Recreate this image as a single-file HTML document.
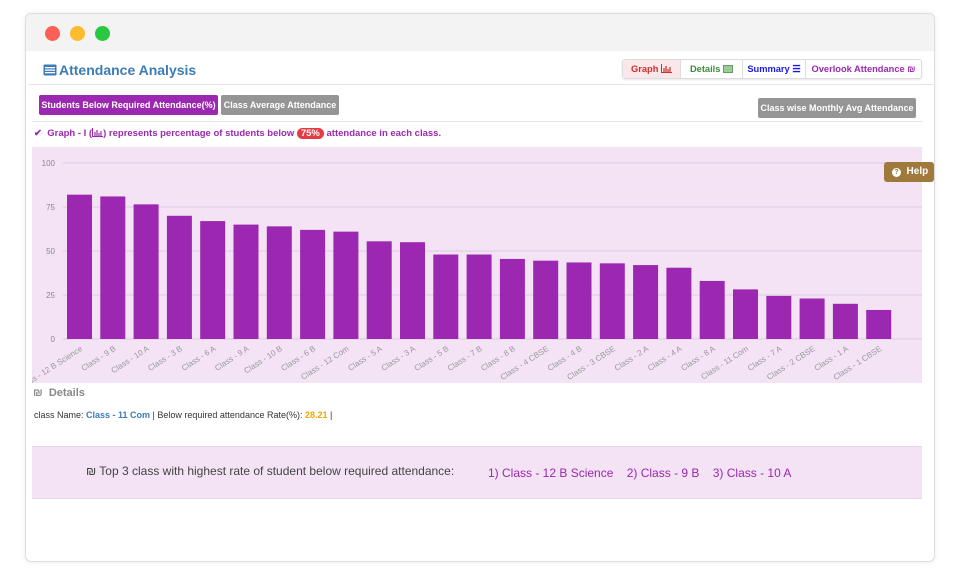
<!DOCTYPE html>
<html><head><meta charset="utf-8"><style>
*{margin:0;padding:0;box-sizing:border-box}
body{width:960px;height:576px;background:#fff;font-family:"Liberation Sans",Arial,sans-serif;position:relative;overflow:hidden}
.win{position:absolute;left:25px;top:13px;width:910px;height:549px;border:1px solid #ddd;border-radius:6px;background:#fff;box-shadow:0 0 6px rgba(0,0,0,.08)}
.bar{position:absolute;left:0;top:0;width:908px;height:37px;background:#f3f3f3;border-radius:6px 6px 0 0}
.dot{position:absolute;top:12px;width:15px;height:15px;border-radius:50%}
.abs{position:absolute}
.btn{position:absolute;color:#fff;font-size:9px;font-weight:bold;text-align:center;line-height:20px;height:20px;border-radius:2px;white-space:nowrap}
.tabs{position:absolute;left:622px;top:59px;width:300px;height:20px;border:1px solid #ddd;border-radius:3px;display:flex;font-size:9.3px;font-weight:bold;box-shadow:0 1px 2px rgba(0,0,0,.1);white-space:nowrap}
.tabs div{line-height:19px;border-right:1px solid #ddd;text-align:center}
.ic{display:inline-block;vertical-align:-1px}
</style></head><body>
<div class="win"><div class="bar"></div>
<div class="dot" style="left:19px;background:#fe5f57"></div>
<div class="dot" style="left:44px;background:#febc2e"></div>
<div class="dot" style="left:69px;background:#28c840"></div>
</div>
<div class="abs" style="left:28px;top:84px;width:906px;border-top:1px solid #e6e6e6"></div>
<svg class="abs" style="left:43px;top:64px" width="14" height="12"><rect x="0.5" y="0.5" width="13" height="11" rx="1" fill="#3d7bb5"/><rect x="2" y="3" width="10" height="1.3" fill="#fff"/><rect x="2" y="5.5" width="10" height="1.3" fill="#fff"/><rect x="2" y="8" width="10" height="1.3" fill="#fff"/></svg>
<div class="abs" style="left:59px;top:62px;font-size:14px;font-weight:bold;color:#3d7bb5">Attendance Analysis</div>
<div class="tabs"><div style="width:58px;color:#c9302c;background:#fbe6ea">Graph <svg class="ic" width="11" height="9"><path d="M0.5 0v8.5h10.5" stroke="#c9302c" fill="none"/><path d="M3 8V4M5 8V2M7 8V5M9 8V3" stroke="#c9302c" stroke-width="1.2"/></svg></div><div style="width:62px;color:#3c8c3c">Details <svg class="ic" width="10" height="8"><rect x="0.5" y="0.5" width="9" height="7" fill="#9c9" stroke="#696"/></svg></div><div style="width:63px;color:#1a1ae6">Summary ☰</div><div style="width:115px;color:#9c27b0;border-right:none">Overlook Attendance ₪</div></div>
<div class="btn" style="left:39px;top:95px;width:179px;background:#9c27b0">Students Below Required Attendance(%)</div>
<div class="btn" style="left:221px;top:95px;width:118px;background:#959595">Class Average Attendance</div>
<div class="btn" style="left:758px;top:98px;width:158px;background:#959595">Class wise Monthly Avg Attendance</div>
<div class="abs" style="left:32px;top:121px;width:890px;border-top:1px solid #e3e3e3"></div>
<div class="abs" style="left:34px;top:128px;font-size:9.5px;font-weight:bold;color:#9c27b0;white-space:nowrap">✔ &nbsp;Graph - I (<svg class="ic" width="11" height="9"><path d="M0.5 0v8.5h10.5" stroke="#9c27b0" fill="none"/><path d="M3 8V4M5 8V2M7 8V5M9 8V3" stroke="#9c27b0" stroke-width="1.2"/></svg>) represents percentage of students below <span style="background:#e53945;color:#fff;border-radius:7px;padding:0 4px">75%</span> attendance in each class.</div>
<svg class="abs" style="left:32px;top:147px" width="890" height="236">
<rect width="890" height="236" fill="#f3e3f5"/>
<g stroke="#dccbe0" stroke-width="1"><line x1="31" x2="890" y1="16" y2="16"/><line x1="31" x2="890" y1="60" y2="60"/><line x1="31" x2="890" y1="104" y2="104"/><line x1="31" x2="890" y1="148" y2="148"/><line x1="31" x2="890" y1="192" y2="192"/></g>
<g font-size="8" fill="#888" text-anchor="end" font-family="Liberation Sans"><text x="23" y="19">100</text><text x="23" y="63">75</text><text x="23" y="107">50</text><text x="23" y="151">25</text><text x="23" y="195">0</text></g>
<g id="bars" fill="#9c27b0"></g><g id="lbl" font-size="8" fill="#999" text-anchor="end" font-family="Liberation Sans"></g>
</svg>
<script>
var v=[82,81,76.5,70,67,65,64,62,61,55.5,55,48,48,45.5,44.5,43.5,43,42,40.5,33,28.2,24.5,23,20,16.5];
var n=["Class - 12 B Science","Class - 9 B","Class - 10 A","Class - 3 B","Class - 6 A","Class - 9 A","Class - 10 B","Class - 6 B","Class - 12 Com","Class - 5 A","Class - 3 A","Class - 5 B","Class - 7 B","Class - 8 B","Class - 4 CBSE","Class - 4 B","Class - 3 CBSE","Class - 2 A","Class - 4 A","Class - 8 A","Class - 11 Com","Class - 7 A","Class - 2 CBSE","Class - 1 A","Class - 1 CBSE"];
var b="",l="";for(var i=0;i<25;i++){var x=35+i*33.3,h=v[i]*1.76;b+='<rect x="'+x+'" y="'+(192-h)+'" width="25" height="'+h+'"/>';var cx=x+16;l+='<text transform="translate('+cx+',203) rotate(-33)">'+n[i]+'</text>';}
document.getElementById("bars").innerHTML=b;document.getElementById("lbl").innerHTML=l;
</script>
<div class="abs" style="left:884px;top:162px;width:50px;height:20px;background:#a07a3c;border-radius:3px;color:#fff;font-size:10px;line-height:20px;padding-left:8px;white-space:nowrap;font-weight:bold"><span style="display:inline-block;width:9px;height:9px;border-radius:50%;background:#fff;color:#a07a3c;font-size:7px;line-height:9px;text-align:center;font-weight:bold;vertical-align:0">?</span>&nbsp; Help</div>
<div class="abs" style="left:33px;top:387px;font-size:11px;font-weight:bold;color:#888">₪ &nbsp;Details</div>
<div class="abs" style="left:34px;top:410px;font-size:9px;color:#333">class Name: <b style="color:#3d7bb5">Class - 11 Com</b> | Below required attendance Rate(%): <b style="color:#f0a500">28.21</b> |</div>
<div class="abs" style="left:32px;top:446px;width:890px;height:53px;background:#f3e3f5;border-top:1px solid #e6d6ea;border-bottom:1px solid #e6d6ea"></div>
<div class="abs" style="left:86px;top:464px;font-size:12px;color:#444">₪ Top 3 class with highest rate of student below required attendance:</div>
<div class="abs" style="left:488px;top:466px;font-size:12px;color:#9c27b0;white-space:nowrap">1) Class - 12 B Science&nbsp;&nbsp;&nbsp; 2) Class - 9 B&nbsp;&nbsp;&nbsp; 3) Class - 10 A</div>
</body></html>
